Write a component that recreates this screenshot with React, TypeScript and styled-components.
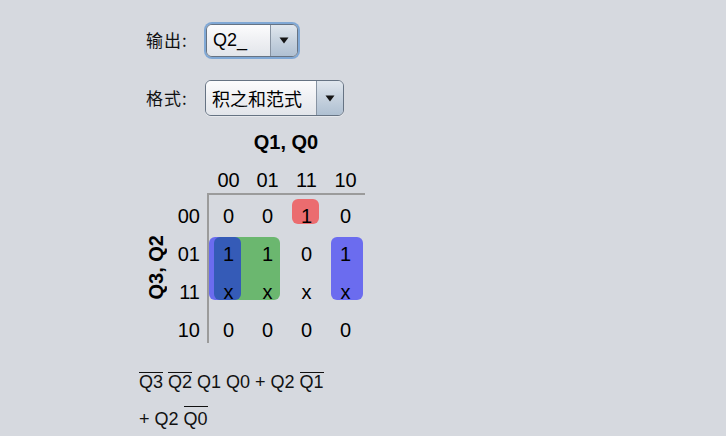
import React from "react"
import styled, { createGlobalStyle } from "styled-components"

const GlobalStyle = createGlobalStyle`
  html, body {
    margin: 0;
    padding: 0;
    height: 100%;
    overflow: hidden;
    background: #d6d9df;
  }
  body {
    font-family: "Liberation Sans", Arial, "Noto Sans CJK SC", sans-serif;
    color: #000;
  }
`

const colLabels = ["00", "01", "11", "10"]
const rowLabels = ["00", "01", "11", "10"]
const values = [
  ["0", "0", "1", "0"],
  ["1", "1", "0", "1"],
  ["x", "x", "x", "x"],
  ["0", "0", "0", "0"],
]

const CELL_W = 39
const CELL_H = 38

interface Group {
  left: number
  top: number
  width: number
  height: number
  color: string
}

// cell based box: inset 5px left, 7px right, 4px from row top
const box = (col: number, row: number, cols: number, rows: number, color: string): Group => ({
  left: col * CELL_W + 5,
  top: row * CELL_H + 4,
  width: cols * CELL_W - 12,
  height: (rows - 1) * CELL_H + 25,
  color,
})

const groups: Group[] = [
  box(2, 0, 1, 1, "rgba(255, 0, 0, 0.5)"),
  box(0, 1, 2, 2, "rgba(0, 150, 0, 0.5)"),
  // wrap-around group, cut at both edges of the map
  { left: 0, top: CELL_H + 4, width: 32, height: CELL_H + 25, color: "rgba(0, 0, 255, 0.5)" },
  { left: 3 * CELL_W + 5, top: CELL_H + 4, width: 32, height: CELL_H + 25, color: "rgba(0, 0, 255, 0.5)" },
]

const ArrowIcon = () => (
  <svg width="10" height="7" viewBox="0 0 10 7">
    <polygon points="0.5,0.5 9.5,0.5 5,6.5" fill="#151515" />
  </svg>
)

const Combo = ({ text, width, focused }: { text: string; width: number; focused?: boolean }) => (
  <ComboBox $width={width} $focused={focused}>
    <ComboText>{text}</ComboText>
    <ArrowButton>
      <ArrowIcon />
    </ArrowButton>
  </ComboBox>
)

const App = () => {
  return (
    <Page>
      <GlobalStyle />
      <Form>
        <Label>输出:</Label>
        <Combo text="Q2_" width={92} focused />
        <Label>格式:</Label>
        <Combo text="积之和范式" width={139} />
      </Form>

      <KMap>
        <MapTitle>Q1, Q0</MapTitle>
        <HeaderRow>
          {colLabels.map((c) => (
            <HeaderCell key={c}>{c}</HeaderCell>
          ))}
        </HeaderRow>
        <AxisLabel>Q3, Q2</AxisLabel>
        <RowLabels>
          {rowLabels.map((r) => (
            <RowLabel key={r}>{r}</RowLabel>
          ))}
        </RowLabels>
        <Cells>
          {groups.map((g, i) => (
            <GroupBox
              key={i}
              style={{ left: g.left, top: g.top, width: g.width, height: g.height, background: g.color }}
            />
          ))}
          {values.map((row, r) =>
            row.map((v, c) => <Cell key={`${r}-${c}`}>{v}</Cell>)
          )}
        </Cells>
      </KMap>

      <Formula>
        <Line>
          <Bar>Q3</Bar> <Bar>Q2</Bar> Q1 Q0 + Q2 <Bar>Q1</Bar>
        </Line>
        <Line>
          + Q2 <Bar $gap={3}>Q0</Bar>
        </Line>
      </Formula>
    </Page>
  )
}

const Page = styled.div`
  padding: 22px 0 0 139px;
`

const Form = styled.div`
  display: grid;
  grid-template-columns: 59px auto;
  grid-template-rows: 36px 36px;
  row-gap: 22px;
  align-items: center;
  justify-items: start;
  margin-left: 7px;
`

const Label = styled.div`
  font-family: "Noto Sans CJK SC", sans-serif;
  font-size: 17px;
  line-height: 20px;
  letter-spacing: 1px;
  color: #111;
`

const ComboBox = styled.div<{ $width: number; $focused?: boolean }>`
  display: flex;
  box-sizing: border-box;
  width: ${(p) => p.$width}px;
  height: ${(p) => (p.$focused ? 33 : 36)}px;
  margin-left: ${(p) => (p.$focused ? 1 : 0)}px;
  border: 1px solid #667383;
  border-radius: 6px;
  overflow: hidden;
  box-shadow: ${(p) => (p.$focused ? "0 0 0 2px #80a8d5" : "0 1px 0 rgba(255, 255, 255, 0.4)")};
`

const ComboText = styled.div`
  flex: 1;
  display: flex;
  align-items: center;
  padding-left: 6px;
  font-size: 18px;
  color: #000;
  background: linear-gradient(180deg, #fcfcfd 0%, #f0f1f4 45%, #e2e5ea 100%);
`

const ArrowButton = styled.div`
  width: 26px;
  display: flex;
  align-items: center;
  justify-content: center;
  border-left: 1px solid #8793a2;
  background: linear-gradient(180deg, #e1e7ee 0%, #c9d4e0 45%, #afc0d2 100%);
`

const KMap = styled.div`
  display: grid;
  grid-template-columns: 18px 42px 158px;
  grid-template-rows: auto auto auto;
  margin: 14px 0 0 8px;
`

const MapTitle = styled.div`
  grid-column: 3;
  grid-row: 1;
  text-align: center;
  font-weight: bold;
  font-size: 20px;
  line-height: 24px;
  margin-bottom: 14px;
`

const HeaderRow = styled.div`
  grid-column: 3;
  grid-row: 2;
  display: grid;
  grid-template-columns: repeat(4, ${CELL_W}px);
  padding-left: 2px;
  margin-bottom: 1px;
`

const HeaderCell = styled.div`
  text-align: center;
  font-size: 20px;
  line-height: 24px;
`

const AxisLabel = styled.div`
  grid-column: 1;
  grid-row: 3;
  justify-self: center;
  align-self: start;
  margin-top: 42px;
  writing-mode: vertical-rl;
  transform: rotate(180deg);
  font-weight: bold;
  font-size: 20px;
  line-height: 18px;
  white-space: nowrap;
`

const RowLabels = styled.div`
  grid-column: 2;
  grid-row: 3;
  display: grid;
  grid-template-rows: ${CELL_H}px ${CELL_H}px ${CELL_H}px 32px;
  padding: 4px 7px 0 0;
`

const RowLabel = styled.div`
  text-align: right;
  font-size: 20px;
  line-height: ${CELL_H}px;
`

const Cells = styled.div`
  grid-column: 3;
  grid-row: 3;
  position: relative;
  display: grid;
  grid-template-columns: repeat(4, ${CELL_W}px);
  grid-template-rows: ${CELL_H}px ${CELL_H}px ${CELL_H}px 32px;
  padding-top: 2px;
  border-top: 2px solid #9b9b9b;
  border-left: 2px solid #9b9b9b;
`

const GroupBox = styled.div`
  position: absolute;
  border-radius: 6px;
`

const Cell = styled.div`
  position: relative;
  z-index: 1;
  text-align: center;
  font-size: 20px;
  line-height: ${CELL_H}px;
`

const Formula = styled.div`
  margin-top: 21px;
  font-size: 18px;
  color: #111;
`

const Line = styled.div`
  height: 37px;
  line-height: 37px;
  white-space: pre;
`

const Bar = styled.span<{ $gap?: number }>`
  display: inline-block;
  line-height: 18px;
  border-top: 1px solid #111;
  padding-top: ${(p) => p.$gap ?? 0}px;
`

export default App
